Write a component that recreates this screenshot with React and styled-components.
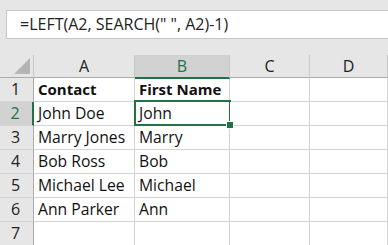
import styled, { createGlobalStyle } from "styled-components";

const Global = createGlobalStyle`
  html, body {
    margin: 0;
    padding: 0;
    background: #e6e6e6;
    font-family: "Open Sans", "Noto Sans", sans-serif;
    color: #1a1a1a;
  }
`;

const columns = ["A", "B", "C", "D"];
const rows = [
  ["Contact", "First Name"],
  ["John Doe", "John"],
  ["Marry Jones", "Marry"],
  ["Bob Ross", "Bob"],
  ["Michael Lee", "Michael"],
  ["Ann Parker", "Ann"],
  ["", ""],
];

const App = () => {
  return (
    <Wrap>
      <Global />
      <FormulaBar>=LEFT(A2, SEARCH(" ", A2)-1)</FormulaBar>
      <Sheet>
        <Corner>
          <Triangle />
        </Corner>
        {columns.map((c) => (
          <ColHead key={c} active={c === "B"}>
            {c}
          </ColHead>
        ))}
        {rows.map((r, i) => (
          <Row key={i} r={r} n={i + 1} />
        ))}
      </Sheet>
    </Wrap>
  );
};

const Row = ({ r, n }) => {
  const bold = n === 1;
  return (
    <>
      <RowHead active={n === 2}>{n}</RowHead>
      <Cell bold={bold}>{r[0]}</Cell>
      <Cell bold={bold}>
        {r[1]}
        {n === 2 && (
          <Selection>
            <Handle />
          </Selection>
        )}
      </Cell>
      <Cell />
      <Cell />
    </>
  );
};

export default App;

const Wrap = styled.div`
  width: 388px;
  height: 245px;
  overflow: hidden;
  padding-top: 10px;
  box-sizing: border-box;
`;

const FormulaBar = styled.div`
  margin-left: 6px;
  height: 29px;
  box-sizing: border-box;
  background: #fff;
  border: 1px solid #c6c6c6;
  border-right: none;
  padding-left: 13px;
  font-size: 16px;
  line-height: 27px;
  white-space: nowrap;
  color: #222;
  margin-bottom: 16px;
`;

const Sheet = styled.div`
  display: grid;
  grid-template-columns: 34px 101px 95px 80px 1fr;
  grid-template-rows: 23px repeat(7, 24px);
`;

const Corner = styled.div`
  position: relative;
  background: #e6e6e6;
  border-right: 1px solid #c8c8c8;
  border-bottom: 1px solid #ababab;
`;

const Triangle = styled.div`
  position: absolute;
  right: 3px;
  bottom: 3px;
  width: 0;
  height: 0;
  border-left: 16px solid transparent;
  border-bottom: 16px solid #b4b4b4;
`;

const ColHead = styled.div`
  box-sizing: border-box;
  background: ${(p) => (p.active ? "#d2d2d2" : "#e6e6e6")};
  color: ${(p) => (p.active ? "#217346" : "#222")};
  border-right: 1px solid #c8c8c8;
  border-bottom: ${(p) => (p.active ? "2px solid #217346" : "1px solid #ababab")};
  margin-bottom: ${(p) => (p.active ? "-1px" : "0")};
  position: relative;
  z-index: ${(p) => (p.active ? 1 : 0)};
  font-size: 16px;
  line-height: 22px;
  text-align: center;
`;

const RowHead = styled.div`
  box-sizing: border-box;
  background: ${(p) => (p.active ? "#d2d2d2" : "#e6e6e6")};
  color: ${(p) => (p.active ? "#217346" : "#222")};
  border-right: ${(p) => (p.active ? "2px solid #217346" : "1px solid #ababab")};
  border-bottom: 1px solid #d4d4d4;
  font-size: 16px;
  line-height: 23px;
  text-align: center;
  padding-right: 2px;
`;

const Cell = styled.div`
  position: relative;
  box-sizing: border-box;
  background: #fff;
  border-right: 1px solid #d4d4d4;
  border-bottom: 1px solid #d4d4d4;
  font-size: ${(p) => (p.bold ? "15px" : "15.7px")};
  font-weight: ${(p) => (p.bold ? 700 : 400)};
  line-height: 23px;
  padding-left: 4px;
  white-space: nowrap;
  color: #111;
`;

const Selection = styled.div`
  position: absolute;
  left: -1px;
  top: -2px;
  right: -2px;
  bottom: -1px;
  border: 2px solid #217346;
  pointer-events: none;
`;

const Handle = styled.div`
  position: absolute;
  right: -5px;
  bottom: -5px;
  width: 6px;
  height: 6px;
  background: #217346;
  border: 1px solid #fff;
  z-index: 2;
`;
